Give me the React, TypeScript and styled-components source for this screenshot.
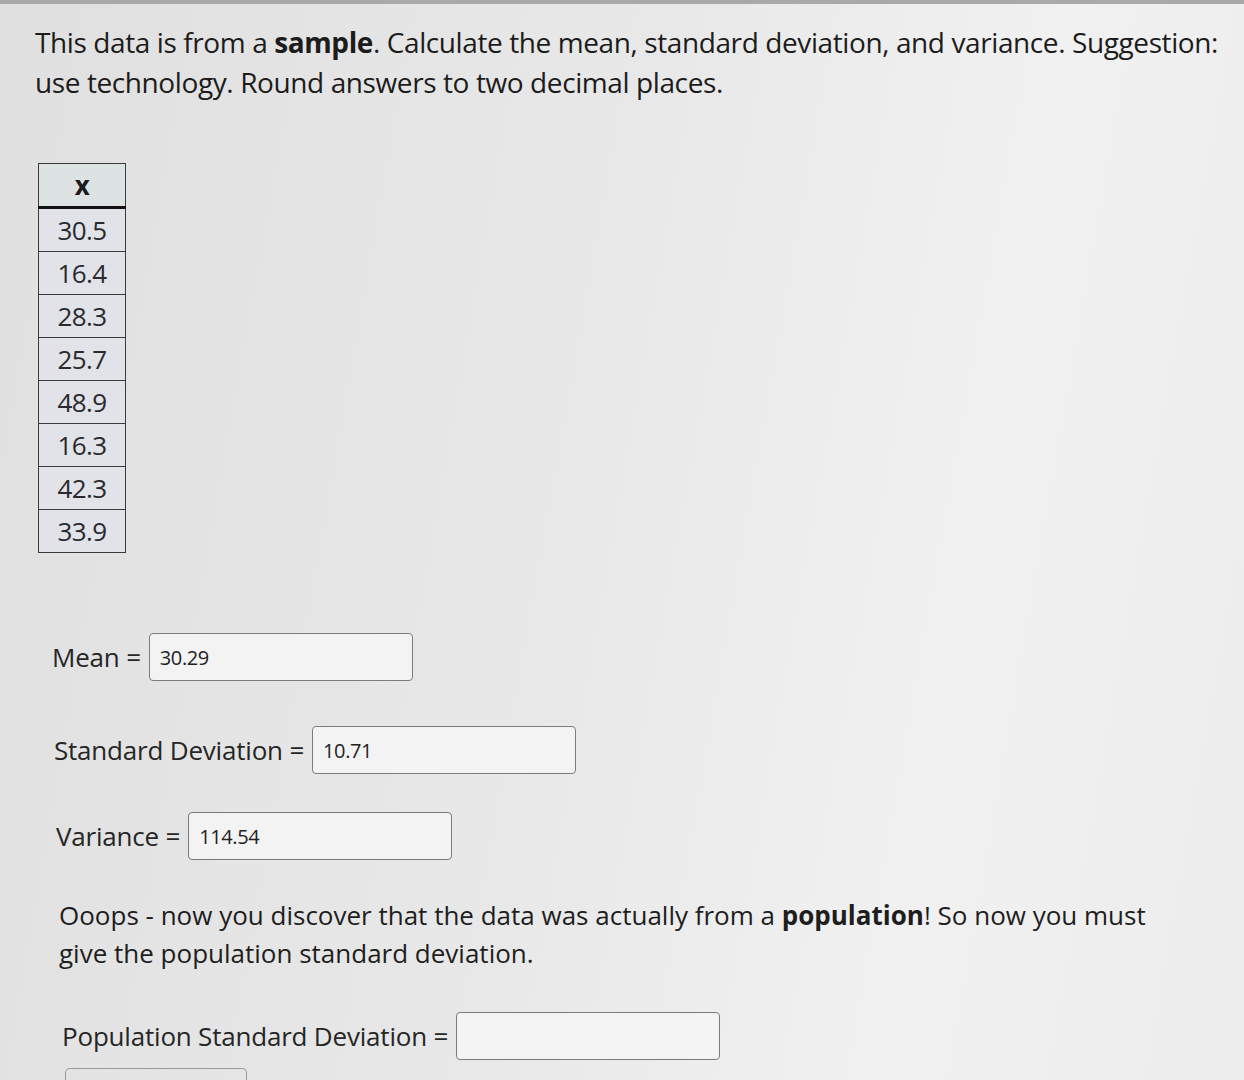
import * as React from "react";
import styled, { createGlobalStyle } from "styled-components";

const GlobalStyle = createGlobalStyle`
  html, body {
    margin: 0;
    padding: 0;
  }
  body {
    font-family: "Open Sans", "Noto Sans", sans-serif;
    color: #1c1c1c;
  }
`;

const Page = styled.main`
  min-height: 1080px;
  box-sizing: border-box;
  border-top: 4px solid #a9a9a9;
  background: linear-gradient(100deg, #e0e0e0 0%, #e8e8e8 45%, #f1f1f1 75%, #ececec 100%);
  padding: 18px 20px 0 35px;
`;

const Prompt = styled.p`
  margin: 0;
  font-size: 28px;
  line-height: 40px;
  letter-spacing: -0.4px;
  white-space: nowrap;

  b {
    font-weight: 700;
  }
`;

const DataTable = styled.table`
  margin: 61px 0 0 3px;
  border-collapse: collapse;
  font-size: 26px;
  letter-spacing: -0.6px;

  th, td {
    width: 86px;
    height: 42px;
    padding: 0;
    text-align: center;
    border: 1.5px solid #3a3a3a;
  }

  th {
    background: #dde3e2;
    font-weight: 700;
    border-bottom: 3px solid #111;
  }

  td {
    background: #e1e3e9;
    color: #2a2a2e;
  }
`;

const Answers = styled.section`
  margin-top: 80px;
  display: flex;
  flex-direction: column;
`;

const Field = styled.label<{ $indent: number; $gap: number }>`
  display: flex;
  align-items: center;
  gap: 8px;
  margin-left: ${(p) => p.$indent}px;
  margin-top: ${(p) => p.$gap}px;
  font-size: 26px;
  letter-spacing: -0.2px;
  color: #262626;
`;

const Box = styled.div`
  width: 264px;
  height: 48px;
  box-sizing: border-box;
  border: 1.5px solid #7c7c7c;
  border-radius: 4px;
  background: #f3f3f3;
  display: flex;
  align-items: center;
  padding-left: 10px;
  font-size: 20px;
  letter-spacing: -0.4px;
  color: #222;
`;

const Note = styled.p`
  margin: 36px 0 0 24px;
  font-size: 26px;
  line-height: 38px;
  letter-spacing: 0;
  color: #1e1e1e;
  white-space: nowrap;

  b {
    font-weight: 700;
  }
`;

const SubmitStub = styled.div`
  margin: 8px 0 0 30px;
  width: 180px;
  height: 20px;
  border: 1.5px solid #9a9a9a;
  border-bottom: none;
  border-radius: 5px 5px 0 0;
`;

const values = [30.5, 16.4, 28.3, 25.7, 48.9, 16.3, 42.3, 33.9];

export default function App() {
  return (
    <>
      <GlobalStyle />
      <Page>
        <Prompt>
          This data is from a <b>sample</b>. Calculate the mean, standard deviation, and variance. Suggestion:
          <br />
          use technology. Round answers to two decimal places.
        </Prompt>

        <DataTable>
          <thead>
            <tr>
              <th>x</th>
            </tr>
          </thead>
          <tbody>
            {values.map((v, i) => (
              <tr key={i}>
                <td>{v.toFixed(1)}</td>
              </tr>
            ))}
          </tbody>
        </DataTable>

        <Answers>
          <Field $indent={17} $gap={0}>
            Mean = <Box>30.29</Box>
          </Field>
          <Field $indent={19} $gap={45}>
            Standard Deviation = <Box>10.71</Box>
          </Field>
          <Field $indent={21} $gap={38}>
            Variance = <Box>114.54</Box>
          </Field>
        </Answers>

        <Note>
          Ooops - now you discover that the data was actually from a <b>population</b>! So now you must
          <br />
          give the population standard deviation.
        </Note>

        <Field $indent={27} $gap={40}>
          Population Standard Deviation = <Box />
        </Field>
        <SubmitStub />
      </Page>
    </>
  );
}
